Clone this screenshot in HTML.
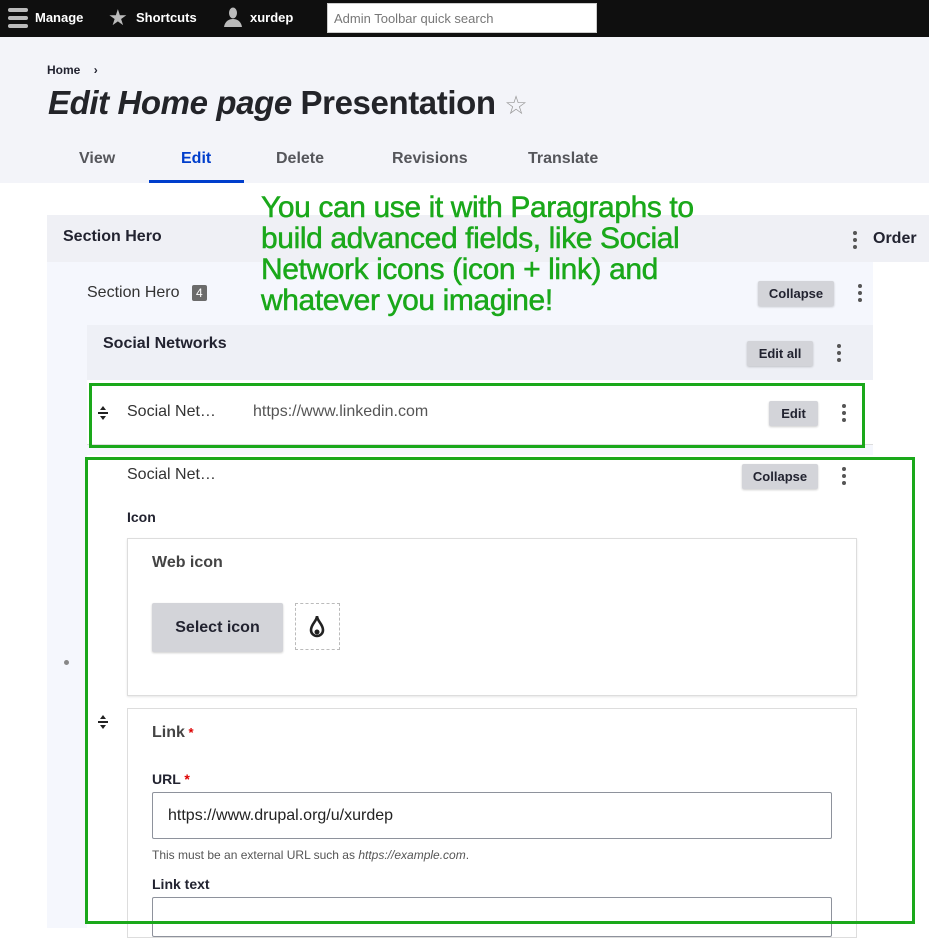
<!DOCTYPE html>
<html><head><meta charset="utf-8"><style>
*{margin:0;padding:0;box-sizing:border-box}
body{width:929px;height:928px;overflow:hidden;background:#fff;font-family:"Liberation Sans",sans-serif;color:#222330;position:relative}
.a{position:absolute}
.btn{position:absolute;background:#d3d4d9;border-radius:2px;font-size:13px;font-weight:bold;color:#222330;text-align:center;box-shadow:0 1px 2px rgba(0,0,0,.2)}
.dots{position:absolute;width:4px}
.dots i{display:block;width:4px;height:4px;border-radius:2px;background:#555;margin-bottom:3px}
.tab{position:absolute;top:150px;font-size:16px;font-weight:bold;color:#55565b}
.hd{position:absolute;width:12px;height:14px}
.hd b{position:absolute;left:1px;top:6px;width:10px;height:2px;background:#222}
.hd s{position:absolute;left:3px;width:0;height:0;border-left:3px solid transparent;border-right:3px solid transparent}
</style></head><body>
<div class="a" style="left:0;top:0;width:929px;height:37px;background:#0f0f0f"></div>
<div class="a" style="left:8px;top:8px;width:20px;height:20px">
<div style="height:4px;background:#bbb;border-radius:2px;margin-bottom:4px"></div><div style="height:4px;background:#bbb;border-radius:2px;margin-bottom:4px"></div><div style="height:4px;background:#bbb;border-radius:2px"></div></div>
<div class="a" style="left:35px;top:10px;color:#fff;font-size:13px;font-weight:bold">Manage</div>
<div class="a" style="left:108px;top:5px;color:#bbb;font-size:22px">★</div>
<div class="a" style="left:136px;top:10px;color:#fff;font-size:13px;font-weight:bold">Shortcuts</div>
<svg class="a" style="left:222px;top:6px" width="22" height="22" viewBox="0 0 22 22"><ellipse cx="11" cy="7" rx="4" ry="5.5" fill="#bbb"/><path d="M2 21 C3 15 7 13 11 13 C15 13 19 15 20 21Z" fill="#bbb"/></svg>
<div class="a" style="left:250px;top:10px;color:#fff;font-size:13px;font-weight:bold">xurdep</div>
<div class="a" style="left:327px;top:3px;width:270px;height:30px;background:#fff;border:1px solid #ccc;font-size:13px;color:#777;padding:7px 6px">Admin Toolbar quick search</div>

<div class="a" style="left:0;top:37px;width:929px;height:146px;background:#f3f4f9"></div>
<div class="a" style="left:47px;top:63px;font-size:12px;font-weight:bold">Home <span style="margin-left:10px">›</span></div>
<div class="a" style="left:48px;top:84px;font-size:33px;font-weight:bold;color:#232429;letter-spacing:-.4px"><i>Edit Home page</i> Presentation <span style="font-weight:normal;color:#999;font-size:26px">☆</span></div>
<div class="tab" style="left:79px">View</div>
<div class="tab" style="left:181px;color:#003ecc">Edit</div>
<div class="a" style="left:149px;top:180px;width:95px;height:3px;background:#003ecc"></div>
<div class="tab" style="left:276px">Delete</div>
<div class="tab" style="left:392px">Revisions</div>
<div class="tab" style="left:528px">Translate</div>

<div class="a" style="left:47px;top:215px;width:826px;height:713px;background:#f5f7fd"></div>
<div class="a" style="left:47px;top:215px;width:882px;height:47px;background:#eff0f5"></div>
<div class="a" style="left:63px;top:228px;font-size:16px;font-weight:bold">Section Hero</div>
<div class="dots" style="left:853px;top:231px"><i></i><i></i><i></i></div>
<div class="a" style="left:873px;top:230px;font-size:16px;font-weight:bold">Order</div>

<div class="a" style="left:87px;top:284px;font-size:16px;color:#333">Section Hero <span style="display:inline-block;background:#6b6b6b;color:#fff;font-size:12px;padding:1px 4px;border-radius:2px;margin-left:8px">4</span></div>
<div class="btn" style="left:758px;top:281px;width:76px;height:25px;line-height:25px">Collapse</div>
<div class="dots" style="left:858px;top:284px"><i></i><i></i><i></i></div>

<div class="a" style="left:87px;top:325px;width:786px;height:55px;background:#eef0f6"></div>
<div class="a" style="left:103px;top:335px;font-size:16px;font-weight:bold">Social Networks</div>
<div class="btn" style="left:747px;top:341px;width:66px;height:25px;line-height:25px">Edit all</div>
<div class="dots" style="left:837px;top:344px"><i></i><i></i><i></i></div>

<div class="a" style="left:87px;top:380px;width:786px;height:65px;background:#fff;border-bottom:1px solid #ddd"></div>
<div class="hd" style="left:97px;top:406px"><s style="top:0;border-bottom:4px solid #222"></s><b></b><s style="top:10px;border-top:4px solid #222"></s></div>
<div class="a" style="left:127px;top:403px;font-size:16px;color:#333">Social Net…</div>
<div class="a" style="left:253px;top:403px;font-size:16px;color:#555">https://www.linkedin.com</div>
<div class="btn" style="left:769px;top:401px;width:49px;height:25px;line-height:25px">Edit</div>
<div class="dots" style="left:842px;top:404px"><i></i><i></i><i></i></div>

<div class="a" style="left:87px;top:455px;width:786px;height:473px;background:#fff"></div>
<div class="a" style="left:127px;top:466px;font-size:16px;color:#333">Social Net…</div>
<div class="btn" style="left:742px;top:464px;width:76px;height:25px;line-height:25px">Collapse</div>
<div class="dots" style="left:842px;top:467px"><i></i><i></i><i></i></div>
<div class="a" style="left:127px;top:509px;font-size:14px;font-weight:bold">Icon</div>
<div class="a" style="left:127px;top:538px;width:730px;height:158px;border:1px solid #ddd;box-shadow:0 1px 2px rgba(0,0,0,.1)"></div>
<div class="a" style="left:152px;top:554px;font-size:16px;font-weight:bold;color:#444">Web icon</div>
<div class="btn" style="left:152px;top:603px;width:131px;height:49px;line-height:49px;font-size:16px">Select icon</div>
<div class="a" style="left:295px;top:603px;width:45px;height:47px;border:1px dashed #bbb"></div>
<svg class="a" style="left:307px;top:614px" width="20" height="26" viewBox="0 0 20 26"><path d="M10 2 C10 7 4 10 4 16 A6 6 0 0 0 16 16 C16 10 10 7 10 2Z" fill="none" stroke="#222" stroke-width="2.6"/><circle cx="10" cy="18" r="2.5" fill="#222"/></svg>
<div class="a" style="left:64px;top:660px;width:5px;height:5px;border-radius:3px;background:#888"></div>
<div class="hd" style="left:97px;top:715px"><s style="top:0;border-bottom:4px solid #222"></s><b></b><s style="top:10px;border-top:4px solid #222"></s></div>
<div class="a" style="left:127px;top:708px;width:730px;height:230px;border:1px solid #ddd"></div>
<div class="a" style="left:152px;top:724px;font-size:16px;font-weight:bold;color:#444">Link<span style="color:#d00;font-size:13px"> *</span></div>
<div class="a" style="left:152px;top:771px;font-size:14px;font-weight:bold">URL<span style="color:#d00"> *</span></div>
<div class="a" style="left:152px;top:792px;width:680px;height:47px;border:1px solid #8e929c;border-radius:2px;font-size:16px;padding:14px 15px;color:#222">https://www.drupal.org/u/xurdep</div>
<div class="a" style="left:152px;top:848px;font-size:12px;color:#555">This must be an external URL such as <i>https://example.com</i>.</div>
<div class="a" style="left:152px;top:876px;font-size:14px;font-weight:bold">Link text</div>
<div class="a" style="left:152px;top:897px;width:680px;height:40px;border:1px solid #8e929c;border-radius:2px;background:#fff"></div>

<div class="a" style="left:89px;top:383px;width:776px;height:65px;border:3px solid #1aa81a"></div>
<div class="a" style="left:85px;top:457px;width:830px;height:467px;border:3px solid #1aa81a"></div>
<div class="a" style="left:261px;top:192px;font-size:30px;line-height:31px;color:#1aa81a;letter-spacing:-.4px;-webkit-text-stroke:.5px #1aa81a">You can use it with Paragraphs to<br>build advanced fields, like Social<br>Network icons (icon + link) and<br>whatever you imagine!</div>
</body></html>
